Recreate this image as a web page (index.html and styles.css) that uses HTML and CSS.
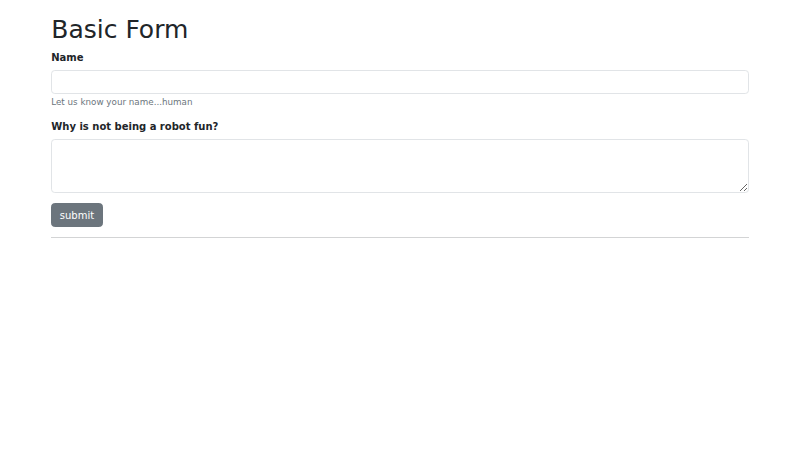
FILE: index.html
```html
<!DOCTYPE html>
<html lang="en">
<head>
<meta charset="utf-8">
<title>Basic Form</title>
<link rel="stylesheet" href="styles.css">
</head>
<body>
<div class="container">
  <h1 class="title">Basic Form</h1>
  <form class="form">
    <div class="field">
      <label class="label" for="name">Name</label>
      <input class="control" type="text" id="name">
      <div class="help">Let us know your name...human</div>
    </div>
    <div class="field">
      <label class="label" for="why">Why is not being a robot fun?</label>
      <textarea class="control area" id="why" rows="3"></textarea>
    </div>
    <button class="btn" type="submit">submit</button>
  </form>
  <hr class="rule">
</div>
</body>
</html>
```

FILE: styles.css
```css
* { box-sizing: border-box; }
html, body { margin: 0; padding: 0; background: #fff; }
body {
  font-family: "DejaVu Sans", sans-serif;
  font-size: 10px;
  line-height: 1.5;
  color: #212529;
}
.container {
  max-width: 712.5px;
  margin: 15px auto 0;
  padding: 0 7.5px;
}
.title {
  font-size: 25px;
  line-height: 30px;
  font-weight: 500;
  margin: 0 0 5px;
}
.form { margin: 0; }
.field { margin-bottom: 10px; }
.label {
  display: inline-block;
  font-weight: 700;
  margin-bottom: 5px;
}
.control {
  display: block;
  width: 100%;
  height: 23.75px;
  padding: 3.75px 7.5px;
  font-family: inherit;
  font-size: 10px;
  line-height: 15px;
  color: #212529;
  background: #fff;
  border: 1px solid #e1e4e7;
  border-radius: 3.75px;
  margin: 0;
}
.area {
  height: 53.75px;
  resize: vertical;
}
.help {
  margin-top: 2.5px;
  font-size: 8.75px;
  line-height: 13.125px;
  color: #6c757d;
}
.btn {
  display: inline-block;
  height: 23.75px;
  padding: 0 7.5px;
  font-family: inherit;
  font-size: 10px;
  line-height: 15px;
  color: #fff;
  background: #6c757d;
  border: 1px solid #6c757d;
  border-radius: 3.75px;
}
.rule {
  margin: 10px 0;
  border: 0;
  border-top: 1px solid #d3d4d5;
  height: 0;
}
```
